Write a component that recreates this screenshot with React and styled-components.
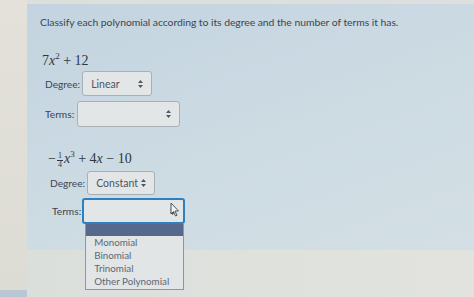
import styled, { createGlobalStyle } from "styled-components";

const Global = createGlobalStyle`
html, body {
  margin:0;
  padding:0;
  width:474px;
  height:297px;
  overflow:hidden;
  background:#dedcd5;
  font-family: Lato, "Open Sans", sans-serif;
}
`

const Screen = styled.div`
width:474px;
height:297px;
display:grid;
grid-template-columns:27px 1fr;
grid-template-rows:4px 246px 1fr;
background:#dedcd5;
`

const TopEdge = styled.div`
grid-column:2;
grid-row:1;
background:#dcdfdc;
`

const Strip = styled.div`
grid-column:1;
grid-row:1 / 4;
display:flex;
flex-direction:column;
justify-content:flex-end;
background:linear-gradient(#e3e1da, #dcdbd4);
`

const Tab = styled.div`
width:38px;
height:7px;
background:#b8c7d1;
`

const Panel = styled.div`
grid-column:2;
grid-row:2;
position:relative;
background:linear-gradient(160deg, #c3d4e0 0%, #cddbe3 55%, #d3dfe4 100%);
padding:10px 0 0 13px;
display:flex;
flex-direction:column;
color:#3b4553;
`

const Bottom = styled.div`
grid-column:2;
grid-row:3;
background:linear-gradient(90deg, #dbdfdb, #e2e3de);
`

const Title = styled.div`
font-size:10.4px;
line-height:16px;
letter-spacing:-0.05px;
`

const Math = styled.div`
font-family:"Liberation Serif", "DejaVu Serif", serif;
font-size:14px;
height:18px;
line-height:18px;
margin-left:${({ indent }) => indent || 0}px;
margin-top:${({ top }) => top}px;
color:#2e3744;
white-space:nowrap;
i { font-style:italic; }
sup { font-size:9px; vertical-align:6px; line-height:0; }
`

const Frac = styled.span`
display:inline-block;
vertical-align:-4px;
text-align:center;
font-size:8px;
line-height:8px;
margin:0 1px;
`

const Num = styled.span`
display:block;
border-bottom:0.8px solid #2e3744;
padding:0 1px;
`

const Den = styled.span`
display:block;
`

const Row = styled.div`
display:flex;
align-items:center;
gap:${({ gap }) => gap}px;
margin-left:${({ indent }) => indent}px;
margin-top:${({ top }) => top}px;
font-size:10.2px;
`

const SelectWrap = styled.div`
position:relative;
`

const Select = styled.div`
box-sizing:border-box;
width:${({ w }) => w}px;
height:${({ h }) => h}px;
display:flex;
align-items:center;
justify-content:space-between;
padding:0 8px 0 8px;
background:#e3e6e6;
border:${({ focused }) => (focused ? "2.5px solid #2d7fbf" : "1px solid #a7b0b5")};
border-radius:3px;
font-size:10.5px;
color:#4a5563;
`

const List = styled.div`
position:absolute;
top:100%;
left:3px;
width:99px;
box-sizing:border-box;
border:1px solid #8e979e;
border-top:none;
background:#e1e5e5;
display:flex;
flex-direction:column;
`

const Highlight = styled.div`
height:12px;
background:#56688c;
`

const Option = styled.div`
font-size:9.8px;
line-height:13px;
padding-left:8px;
color:#5b6878;
&:first-of-type { margin-top:3px; }
&:last-child { margin-bottom:1px; }
`

const Pointer = styled.svg`
position:absolute;
right:6px;
top:4px;
`

const Arrows = () => (
  <svg width="5" height="8" viewBox="0 0 5 8">
    <path d="M2.5 0 L5 3 H0 Z M2.5 8 L5 5 H0 Z" fill="#4e5866" />
  </svg>
)

export default function App() {
  return (
    <>
      <Global />
      <Screen>
        <Strip>
          <Tab />
        </Strip>
        <TopEdge />
        <Panel>
          <Title>Classify each polynomial according to its degree and the number of terms it has.</Title>
          <Math indent={2} top={22}>
            7<i>x</i><sup>2</sup> + 12
          </Math>
          <Row indent={5} top={1} gap={2}>
            <span>Degree:</span>
            <Select w={70} h={25}>
              Linear <Arrows />
            </Select>
          </Row>
          <Row indent={5} top={5} gap={3}>
            <span>Terms:</span>
            <Select w={103} h={26}>
              <span /> <Arrows />
            </Select>
          </Row>
          <Math indent={8} top={23}>
            −<Frac><Num>1</Num><Den>4</Den></Frac><i>x</i><sup>3</sup> + 4<i>x</i> − 10
          </Math>
          <Row indent={10} top={3} gap={2}>
            <span>Degree:</span>
            <Select w={68} h={24}>
              Constant <Arrows />
            </Select>
          </Row>
          <Row indent={12} top={3} gap={1}>
            <span>Terms:</span>
            <SelectWrap>
              <Select w={103} h={26} focused>
                <span /> <Arrows />
              </Select>
              <Pointer width="9" height="15" viewBox="0 0 9 15">
                <path d="M1 1 V12 L3.5 9.5 L5.5 14 L7 13.3 L5 9 H8.5 Z" fill="#f4f4f4" stroke="#3b4553" strokeWidth="0.9" />
              </Pointer>
              <List>
                <Highlight />
                <Option>Monomial</Option>
                <Option>Binomial</Option>
                <Option>Trinomial</Option>
                <Option>Other Polynomial</Option>
              </List>
            </SelectWrap>
          </Row>
        </Panel>
        <Bottom />
      </Screen>
    </>
  );
}
